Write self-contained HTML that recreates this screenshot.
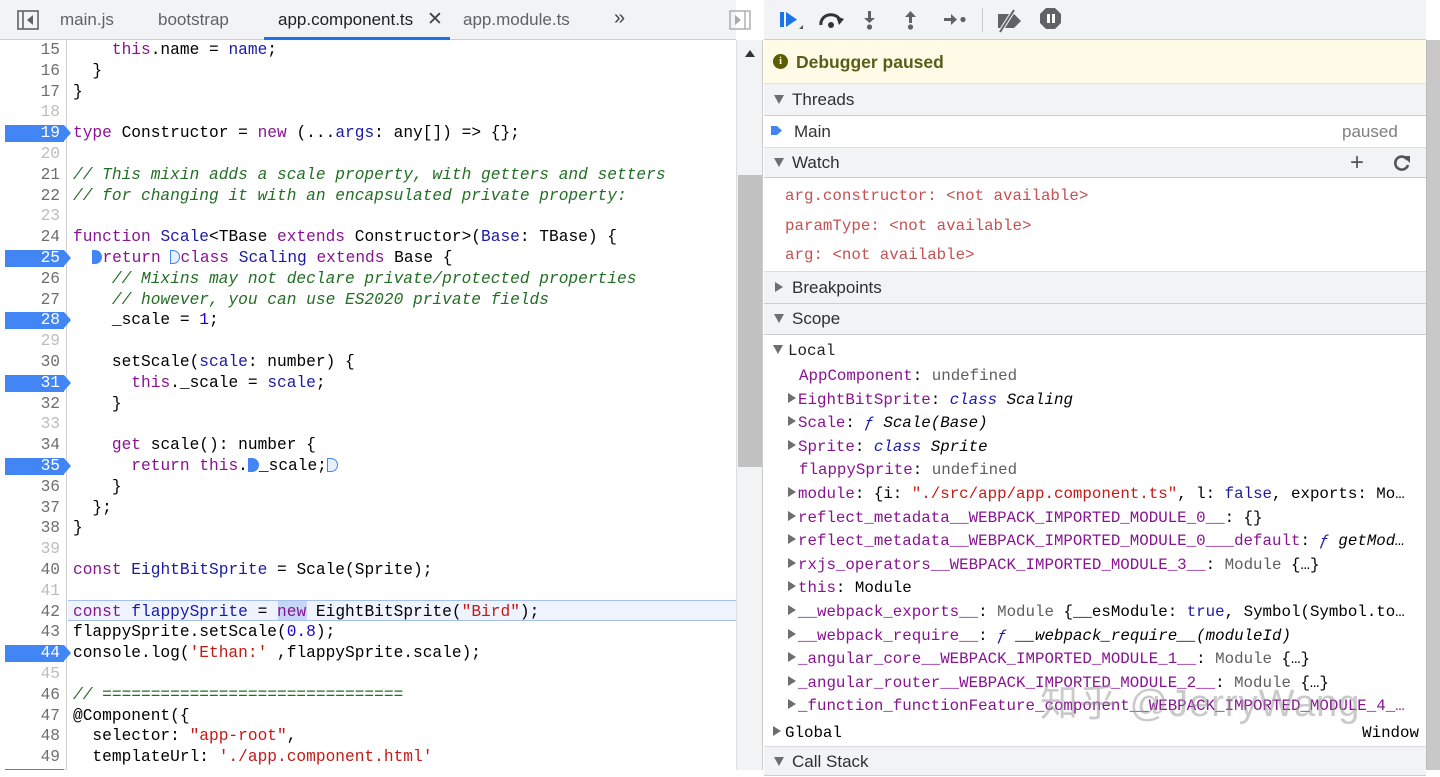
<!DOCTYPE html>
<html><head><meta charset="utf-8"><style>
*{margin:0;padding:0;box-sizing:border-box}
body{width:1440px;height:770px;overflow:hidden;background:#fff;font-family:"Liberation Sans",sans-serif;position:relative}
.abs{position:absolute}
.mono{font-family:"Liberation Mono",monospace;font-size:16.2px;white-space:pre}
#tabs{left:0;top:0;width:736px;height:40px;background:#f1f3f4;border-bottom:1px solid #cbcdd1}
.tab{position:absolute;top:10px;font-size:17px;color:#5f6368}
#gutter{left:0;top:40px;width:67px;height:730px;border-right:1px solid #d0d0d0;background:#fff}
.ln{position:absolute;left:0;width:60px;text-align:right;font-family:"Liberation Mono",monospace;font-size:16.2px;color:#6e6e6e;height:20.8px;line-height:20.8px}
.ln.e{color:#bdbdbd}
.bp{position:absolute;left:5px;width:59px;height:17px;background:#4285f4;color:#fff;text-align:right;padding-right:4px;font-family:"Liberation Mono",monospace;font-size:16.2px;line-height:17px}
.bp:after{content:"";position:absolute;right:-7px;top:0;border-left:7px solid #4285f4;border-top:8.5px solid transparent;border-bottom:8.5px solid transparent}
.cl{position:absolute;left:73px;height:20.8px;line-height:20.8px}
.k{color:#881391}.v{color:#1a1aa6}.c{color:#236e25;font-style:italic}.s{color:#c41a16}.n{color:#1c00cf}
#sb{left:736px;top:40px;width:27px;height:730px;background:#f1f3f4;border-left:1px solid #ddd;border-right:1px solid #ccc}
#right{left:764px;top:0;width:662px;height:770px}
.hdr{position:absolute;left:0;width:662px;background:#f1f3f4;border-bottom:1px solid #cbcdd1;font-size:17px;color:#303030}
.tri{display:inline-block;width:0;height:0;border-left:5px solid transparent;border-right:5px solid transparent;border-top:9px solid #6e6e6e;margin:0 8px 1px 10px}
.trr{display:inline-block;width:0;height:0;border-top:5px solid transparent;border-bottom:5px solid transparent;border-left:8px solid #6e6e6e;margin:0 2px 1px 0}
.sr{position:absolute;left:35px;font-family:"Liberation Mono",monospace;font-size:15.8px;white-space:pre;line-height:23.6px;height:23.6px}
.p{color:#881391}.g{color:#5e5e5e}.nv{color:#1a1aa6}
.w{position:absolute;left:21px;font-family:"Liberation Mono",monospace;font-size:15.8px;color:#c55050;white-space:pre}
</style></head><body>
<div id="tabs" class="abs">
  <svg class="abs" style="left:17px;top:10px" width="22" height="20"><rect x="1" y="1" width="20" height="18" fill="none" stroke="#5f6368" stroke-width="1.6"/><line x1="6" y1="1" x2="6" y2="19" stroke="#5f6368" stroke-width="1.6"/><path d="M16 5 L10 10 L16 15Z" fill="#5f6368"/></svg>
  <span class="tab" style="left:60px">main.js</span>
  <span class="tab" style="left:158px">bootstrap</span>
  <span class="tab" style="left:278px;color:#202124">app.component.ts</span>
  <span class="tab" style="left:427px;color:#444;font-size:19px;top:8px">✕</span>
  <div class="abs" style="left:264px;top:37px;width:186px;height:3px;background:#1a73e8"></div>
  <span class="tab" style="left:463px">app.module.ts</span>
  <span class="tab" style="left:614px;font-size:20px;top:7px;color:#444">»</span>
  <svg class="abs" style="left:729px;top:10px" width="22" height="20"><rect x="1" y="1" width="20" height="18" fill="none" stroke="#aaa" stroke-width="1.4"/><line x1="16" y1="1" x2="16" y2="19" stroke="#aaa" stroke-width="1.4"/><path d="M6 5 L12 10 L6 15Z" fill="#aaa"/></svg>
</div>
<div id="gutter" class="abs"></div>
<div id="code" class="abs mono" style="left:0;top:40px;width:736px;height:730px;overflow:hidden">
<div class="abs" style="left:68px;top:560px;width:668px;height:21px;background:#eef3fd;border-top:1px solid #a8c0ee;border-bottom:1px solid #a8c0ee"></div>
<div class="abs" style="left:278px;top:561px;width:29px;height:19px;background:#c7d6f7"></div>
<div class="ln" style="top:0">15</div><div class="cl" style="top:0">    <span class="k">this</span>.name = <span class="v">name</span>;</div>
<div class="ln" style="top:20.8px">16</div><div class="cl" style="top:20.8px">  }</div>
<div class="ln" style="top:41.6px">17</div><div class="cl" style="top:41.6px">}</div>
<div class="ln e" style="top:62.4px">18</div>
<div class="bp" style="top:85px">19</div><div class="cl" style="top:83.2px"><span class="k">type</span> Constructor = <span class="k">new</span> (...<span class="v">args</span>: any[]) => {};</div>
<div class="ln e" style="top:104px">20</div>
<div class="ln" style="top:124.8px">21</div><div class="cl c" style="top:124.8px">// This mixin adds a scale property, with getters and setters</div>
<div class="ln" style="top:145.6px">22</div><div class="cl c" style="top:145.6px">// for changing it with an encapsulated private property:</div>
<div class="ln e" style="top:166.4px">23</div>
<div class="ln" style="top:187.2px">24</div><div class="cl" style="top:187.2px"><span class="k">function</span> <span class="v">Scale</span>&lt;TBase <span class="k">extends</span> Constructor&gt;(<span class="v">Base</span>: TBase) {</div>
<div class="bp" style="top:210px">25</div><div class="cl" style="top:208px">  <span style="display:inline-block;width:10px;height:14px;background:#4285f4;border-radius:0 7px 7px 0;vertical-align:-2px"></span><span class="k">return</span> <span style="display:inline-block;width:10px;height:14px;border:1.5px solid #4285f4;border-radius:0 7px 7px 0;vertical-align:-2px;background:#e8f0fe"></span><span class="k">class</span> <span class="v">Scaling</span> <span class="k">extends</span> Base {</div>
<div class="ln" style="top:228.8px">26</div><div class="cl c" style="top:228.8px">    // Mixins may not declare private/protected properties</div>
<div class="ln" style="top:249.6px">27</div><div class="cl c" style="top:249.6px">    // however, you can use ES2020 private fields</div>
<div class="bp" style="top:272px">28</div><div class="cl" style="top:270.4px">    _scale = <span class="n">1</span>;</div>
<div class="ln e" style="top:291.2px">29</div>
<div class="ln" style="top:312px">30</div><div class="cl" style="top:312px">    setScale(<span class="v">scale</span>: number) {</div>
<div class="bp" style="top:334.6px">31</div><div class="cl" style="top:332.8px">      <span class="k">this</span>._scale = <span class="v">scale</span>;</div>
<div class="ln" style="top:353.6px">32</div><div class="cl" style="top:353.6px">    }</div>
<div class="ln e" style="top:374.4px">33</div>
<div class="ln" style="top:395.2px">34</div><div class="cl" style="top:395.2px">    <span class="k">get</span> scale(): number {</div>
<div class="bp" style="top:417.8px">35</div><div class="cl" style="top:416px">      <span class="k">return</span> <span class="k">this</span>.<span style="display:inline-block;width:11px;height:14px;background:#4285f4;border-radius:0 7px 7px 0;vertical-align:-2px"></span>_scale;<span style="display:inline-block;width:11px;height:14px;border:1.5px solid #4285f4;border-radius:0 7px 7px 0;vertical-align:-2px;background:#e8f0fe"></span></div>
<div class="ln" style="top:436.8px">36</div><div class="cl" style="top:436.8px">    }</div>
<div class="ln" style="top:457.6px">37</div><div class="cl" style="top:457.6px">  };</div>
<div class="ln" style="top:478.4px">38</div><div class="cl" style="top:478.4px">}</div>
<div class="ln e" style="top:499.2px">39</div>
<div class="ln" style="top:520px">40</div><div class="cl" style="top:520px"><span class="k">const</span> <span class="v">EightBitSprite</span> = Scale(Sprite);</div>
<div class="ln e" style="top:540.8px">41</div>
<div class="ln" style="top:561.6px">42</div><div class="cl" style="top:561.6px"><span class="k">const</span> <span class="v">flappySprite</span> = <span class="k">new</span> EightBitSprite(<span class="s">"Bird"</span>);</div>
<div class="ln" style="top:582.4px">43</div><div class="cl" style="top:582.4px">flappySprite.setScale(<span class="n">0.8</span>);</div>
<div class="bp" style="top:605px">44</div><div class="cl" style="top:603.2px">console.log(<span class="s">'Ethan:'</span> ,flappySprite.scale);</div>
<div class="ln e" style="top:624px">45</div>
<div class="ln" style="top:644.8px">46</div><div class="cl c" style="top:644.8px">// ===============================</div>
<div class="ln" style="top:665.6px">47</div><div class="cl" style="top:665.6px">@Component({</div>
<div class="ln" style="top:686.4px">48</div><div class="cl" style="top:686.4px">  selector: <span class="s">"app-root"</span>,</div>
<div class="ln" style="top:707.2px">49</div><div class="cl" style="top:707.2px">  templateUrl: <span class="s">'./app.component.html'</span></div>
<div class="bp" style="top:729px">50</div>
</div>
<div id="sb" class="abs">
  <div class="abs" style="left:8px;top:10px;border-left:5px solid transparent;border-right:5px solid transparent;border-bottom:7px solid #333"></div>
  <div class="abs" style="left:1px;top:135px;width:24px;height:292px;background:#c1c1c1"></div>
</div>
<div id="right" class="abs">
  <div class="hdr" style="top:0;height:40px">
    <svg class="abs" style="left:14px;top:10px" width="26" height="22"><rect x="2" y="2" width="4" height="15" fill="#1a73e8"/><path d="M8 2 L19 9.5 L8 17Z" fill="#1a73e8"/><path d="M21 19 L25 15 L25 19Z" fill="#555"/></svg>
    <svg class="abs" style="left:54px;top:10px" width="28" height="20"><path d="M3 15 A10 9 0 0 1 22 10" fill="none" stroke="#333" stroke-width="3"/><path d="M18 6 L26 9 L21 15Z" fill="#333"/><circle cx="13" cy="15" r="3" fill="#333"/></svg>
    <svg class="abs" style="left:98px;top:9px" width="16" height="22"><rect x="6" y="2" width="3" height="8" fill="#5f6368"/><path d="M2 9 L13 9 L7.5 14Z" fill="#5f6368"/><circle cx="7.5" cy="18" r="2.6" fill="#5f6368"/></svg>
    <svg class="abs" style="left:139px;top:9px" width="16" height="22"><path d="M2 8 L13 8 L7.5 2Z" fill="#5f6368"/><rect x="6" y="7" width="3" height="7" fill="#5f6368"/><circle cx="7.5" cy="18" r="2.6" fill="#5f6368"/></svg>
    <svg class="abs" style="left:178px;top:10px" width="26" height="18"><rect x="2" y="8" width="8" height="3" fill="#5f6368"/><path d="M9 4 L15 9.5 L9 15Z" fill="#5f6368"/><circle cx="21" cy="9.5" r="2.6" fill="#5f6368"/></svg>
    <div class="abs" style="left:218px;top:8px;width:1px;height:24px;background:#ccc"></div>
    <svg class="abs" style="left:230px;top:8px" width="30" height="26"><path d="M4 6 L20 6 L27 13 L20 20 L4 20Z" fill="#5f6368"/><line x1="6" y1="24" x2="20" y2="2" stroke="#f1f3f4" stroke-width="4"/><line x1="6" y1="24" x2="20" y2="2" stroke="#5f6368" stroke-width="2"/></svg>
    <svg class="abs" style="left:275px;top:7px" width="24" height="24"><path d="M7 1 L16 1 L22 7 L22 16 L16 22 L7 22 L1 16 L1 7Z" fill="#5f6368"/><rect x="8" y="7" width="3" height="9" fill="#fff"/><rect x="13" y="7" width="3" height="9" fill="#fff"/></svg>
  </div>
  <div class="abs" style="left:0;top:40px;width:662px;height:44px;background:#fffbe6;border-bottom:1px solid #e8e4c8">
    <span class="abs" style="left:9px;top:14px;width:15px;height:15px;border-radius:50%;background:#5c5c00;color:#fffbe6;font:bold 11px 'Liberation Serif',serif;text-align:center;line-height:15px">i</span>
    <span class="abs" style="left:32px;top:12px;font-size:17.5px;font-weight:bold;color:#5c5c1a">Debugger paused</span>
  </div>
  <div class="hdr" style="top:84px;height:32px;line-height:31px"><span class="tri"></span>Threads</div>
  <div class="abs" style="left:0;top:116px;width:662px;height:31px;background:#fff">
    <svg class="abs" style="left:7px;top:8px" width="12" height="13"><path d="M0 2 L6 2 L11 6.5 L6 11 L0 11Z" fill="#4285f4"/></svg>
    <span class="abs" style="left:30px;top:6px;font-size:17px;color:#333">Main</span>
    <span class="abs" style="left:578px;top:6px;font-size:17px;color:#808080">paused</span>
  </div>
  <div class="hdr" style="top:147px;height:31px;line-height:29px;border-top:1px solid #ddd"><span class="tri"></span>Watch
    <span class="abs" style="left:586px;top:0;font-size:24px;color:#555">+</span>
    <svg class="abs" style="left:628px;top:5px" width="20" height="20"><path d="M15.5 7 A6.5 6.5 0 1 0 16 12" fill="none" stroke="#555" stroke-width="2.6"/><path d="M11 3 L18 3 L18 10Z" fill="#555"/></svg>
  </div>
  <div class="w" style="top:187px">arg.constructor: &lt;not available&gt;</div>
  <div class="w" style="top:217px">paramType: &lt;not available&gt;</div>
  <div class="w" style="top:246px">arg: &lt;not available&gt;</div>
  <div class="hdr" style="top:271px;height:33px;line-height:32px;border-top:1px solid #ddd"><span class="trr" style="margin-left:11px;margin-right:9px"></span>Breakpoints</div>
  <div class="hdr" style="top:304px;height:31px;line-height:30px"><span class="tri"></span>Scope</div>
  <div class="abs" style="left:9px;top:342px;font-family:'Liberation Mono',monospace;font-size:15.8px;color:#222"><span class="tri" style="margin:0 5px 1px 0"></span>Local</div>
  <div class="sr" style="top:365px"><span class="p">AppComponent</span>: <span class="g">undefined</span></div>
  <div class="sr" style="top:388.6px;left:24px"><span class="trr"></span><span class="p">EightBitSprite</span>: <i class="nv">class</i> <i>Scaling</i></div>
  <div class="sr" style="top:412.2px;left:24px"><span class="trr"></span><span class="p">Scale</span>: <i class="nv">ƒ</i> <i>Scale(Base)</i></div>
  <div class="sr" style="top:435.8px;left:24px"><span class="trr"></span><span class="p">Sprite</span>: <i class="nv">class</i> <i>Sprite</i></div>
  <div class="sr" style="top:459.4px"><span class="p">flappySprite</span>: <span class="g">undefined</span></div>
  <div class="sr" style="top:483px;left:24px"><span class="trr"></span><span class="p">module</span>: {i: <span class="s">"./src/app/app.component.ts"</span>, l: <span class="nv">false</span>, exports: Mo…</div>
  <div class="sr" style="top:506.6px;left:24px"><span class="trr"></span><span class="p">reflect_metadata__WEBPACK_IMPORTED_MODULE_0__</span>: {}</div>
  <div class="sr" style="top:530.2px;left:24px"><span class="trr"></span><span class="p">reflect_metadata__WEBPACK_IMPORTED_MODULE_0___default</span>: <i class="nv">ƒ</i> <i>getMod…</i></div>
  <div class="sr" style="top:553.8px;left:24px"><span class="trr"></span><span class="p">rxjs_operators__WEBPACK_IMPORTED_MODULE_3__</span>: <span class="g">Module</span> {…}</div>
  <div class="sr" style="top:577.4px;left:24px"><span class="trr"></span><span class="p">this</span>: Module</div>
  <div class="sr" style="top:601px;left:24px"><span class="trr"></span><span class="p">__webpack_exports__</span>: <span class="g">Module</span> {__esModule: <span class="nv">true</span>, Symbol(Symbol.to…</div>
  <div class="sr" style="top:624.6px;left:24px"><span class="trr"></span><span class="p">__webpack_require__</span>: <i class="nv">ƒ</i> <i>__webpack_require__(moduleId)</i></div>
  <div class="sr" style="top:648.2px;left:24px"><span class="trr"></span><span class="p">_angular_core__WEBPACK_IMPORTED_MODULE_1__</span>: <span class="g">Module</span> {…}</div>
  <div class="sr" style="top:671.8px;left:24px"><span class="trr"></span><span class="p">_angular_router__WEBPACK_IMPORTED_MODULE_2__</span>: <span class="g">Module</span> {…}</div>
  <div class="sr" style="top:695.4px;left:24px"><span class="trr"></span><span class="p">_function_functionFeature_component__WEBPACK_IMPORTED_MODULE_4_…</span></div>
  <div class="abs" style="left:276px;top:672px;font-size:38px;letter-spacing:1px;color:rgba(150,150,150,.5);font-family:'Liberation Sans','Noto Sans CJK SC',sans-serif;white-space:nowrap">知乎 @JerryWang</div>
  <div class="sr" style="top:722px;left:9px;width:646px"><span class="trr" style="margin-right:4px"></span>Global<span class="abs" style="right:0;top:0">Window</span></div>
  <div class="hdr" style="top:746px;height:30px;line-height:30px;border-top:1px solid #ddd"><span class="tri"></span>Call Stack</div>
</div>
<div class="abs" style="left:1426px;top:40px;width:14px;height:730px;background:#c8c8c8;border-left:1px solid #bbb"></div>
</body></html>
